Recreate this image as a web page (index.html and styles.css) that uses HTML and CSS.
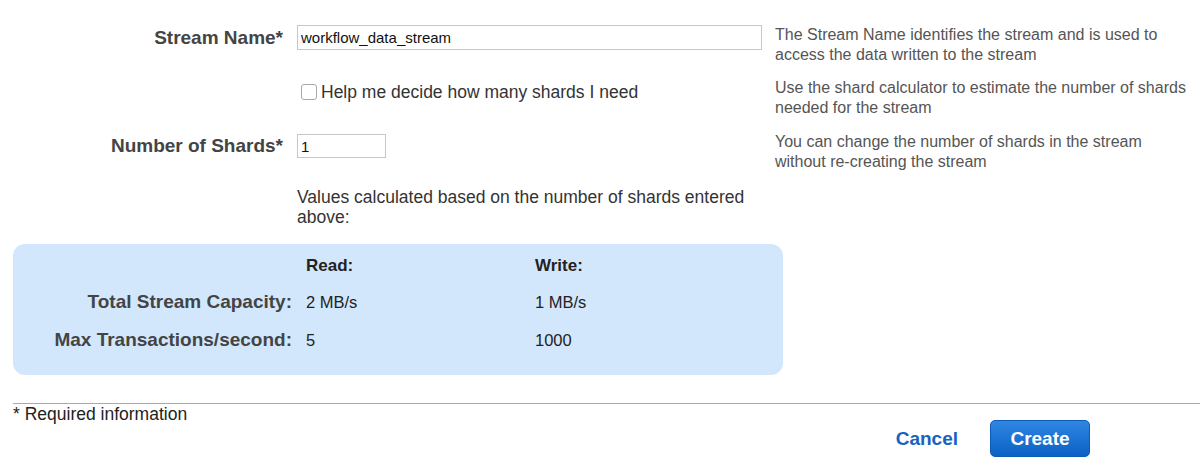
FILE: index.html
```html
<!DOCTYPE html>
<html lang="en">
<head>
    <meta charset="UTF-8">
    <meta name="viewport" content="width=device-width, initial-scale=1.0">
    <title>Create Kinesis Stream</title>
    <link rel="stylesheet" href="styles.css">
</head>
<body>
    <div id="container">
        <div class="form">
            <div class="row row_name">
                <label class="label" for="streamName">Stream Name*</label>
                <div class="field">
                    <input class="text_input name_input" id="streamName" type="text" value="workflow_data_stream">
                </div>
                <p class="help">The Stream Name identifies the stream and is used to access the data written to the stream</p>
            </div>
            <div class="row row_check">
                <span class="label"></span>
                <div class="field check_field">
                    <span class="checkbox"></span>
                    <span>Help me decide how many shards I need</span>
                </div>
                <p class="help">Use the shard calculator to estimate the number of shards needed for the stream</p>
            </div>
            <div class="row row_shards">
                <label class="label" for="shards">Number of Shards*</label>
                <div class="field">
                    <input class="text_input shard_input" id="shards" type="text" value="1">
                </div>
                <p class="help">You can change the number of shards in the stream without re-creating the stream</p>
            </div>
            <div class="row row_note">
                <span class="label"></span>
                <p class="field note">Values calculated based on the number of shards entered above:</p>
            </div>
        </div>

        <div class="calc">
            <span></span>
            <span class="calc_head">Read:</span>
            <span class="calc_head">Write:</span>

            <span class="calc_label">Total Stream Capacity:</span>
            <span class="calc_value">2 MB/s</span>
            <span class="calc_value">1 MB/s</span>

            <span class="calc_label">Max Transactions/second:</span>
            <span class="calc_value">5</span>
            <span class="calc_value">1000</span>
        </div>

        <div class="footer">
            <p class="required">* Required information</p>
            <div class="actions">
                <a class="cancel" href="#">Cancel</a>
                <button class="create" type="button">Create</button>
            </div>
        </div>
    </div>
</body>
</html>
```

FILE: styles.css
```css
* {
    margin: 0;
    padding: 0;
    box-sizing: border-box;
}

body {
    font-family: "Liberation Sans", Arial, Helvetica, sans-serif;
    color: #222;
    background: #fff;
}

#container {
    width: 1200px;
    padding-top: 25px;
}

.row {
    display: grid;
    grid-template-columns: 297px 478px 420px;
    align-items: start;
}

.row_name { height: 53px; }
.row_check { height: 54px; }
.row_shards { height: 55px; }
.row_note { height: 57px; }

.label {
    padding-right: 14px;
    text-align: right;
    font-weight: bold;
    font-size: 19px;
    color: #444;
    line-height: 25px;
}

.row_shards .label {
    margin-top: 2px;
    line-height: 24px;
}

.help {
    font-size: 16px;
    line-height: 20px;
    color: #555;
}

.text_input {
    display: block;
    height: 25px;
    border: 1px solid #c8c8c8;
    padding: 0 3px;
    font-family: "Liberation Sans", Arial, sans-serif;
    font-size: 15px;
    color: #111;
    outline: none;
}

.name_input {
    width: 465px;
}

.shard_input {
    width: 89px;
    height: 24px;
    margin-top: 2px;
}

.check_field {
    display: flex;
    align-items: center;
    height: 28px;
    font-size: 17.5px;
    color: #333;
}

.checkbox {
    width: 16px;
    height: 16px;
    margin: 0 4px 0 4px;
    border: 1px solid #a9a9a9;
    border-radius: 3px;
    background: #fff;
}

.note {
    width: 465px;
    font-size: 17.5px;
    line-height: 20px;
    color: #333;
}

.calc {
    display: grid;
    grid-template-columns: 279px 229px 1fr;
    grid-template-rows: 26px 30px 30px;
    row-gap: 8px;
    align-items: center;
    width: 770px;
    height: 131px;
    margin-left: 13px;
    padding: 9px 0 20px;
    background-color: #d2e7fc;
    border-radius: 12px;
}

.calc_head {
    padding-left: 14px;
    font-weight: bold;
    font-size: 17px;
    color: #222;
}

.calc_label {
    text-align: right;
    font-weight: bold;
    font-size: 19px;
    color: #444;
}

.calc_value {
    padding-left: 14px;
    font-size: 16.5px;
    color: #222;
}

.footer {
    display: flex;
    justify-content: space-between;
    align-items: flex-start;
    margin: 28px 0 0 13px;
    border-top: 1px solid #aaa;
}

.required {
    font-size: 17.5px;
    line-height: 20px;
    color: #222;
}

.actions {
    display: flex;
    align-items: center;
    gap: 32px;
    margin: 16px 110px 0 0;
}

.cancel {
    font-weight: bold;
    font-size: 19px;
    color: #1762c0;
    text-decoration: none;
}

.create {
    width: 100px;
    height: 37px;
    border: 1px solid #0d5bb8;
    border-radius: 5px;
    background: linear-gradient(#2f86e2, #0c61c4);
    font-family: "Liberation Sans", Arial, sans-serif;
    font-weight: bold;
    font-size: 19px;
    color: #fff;
}
```
